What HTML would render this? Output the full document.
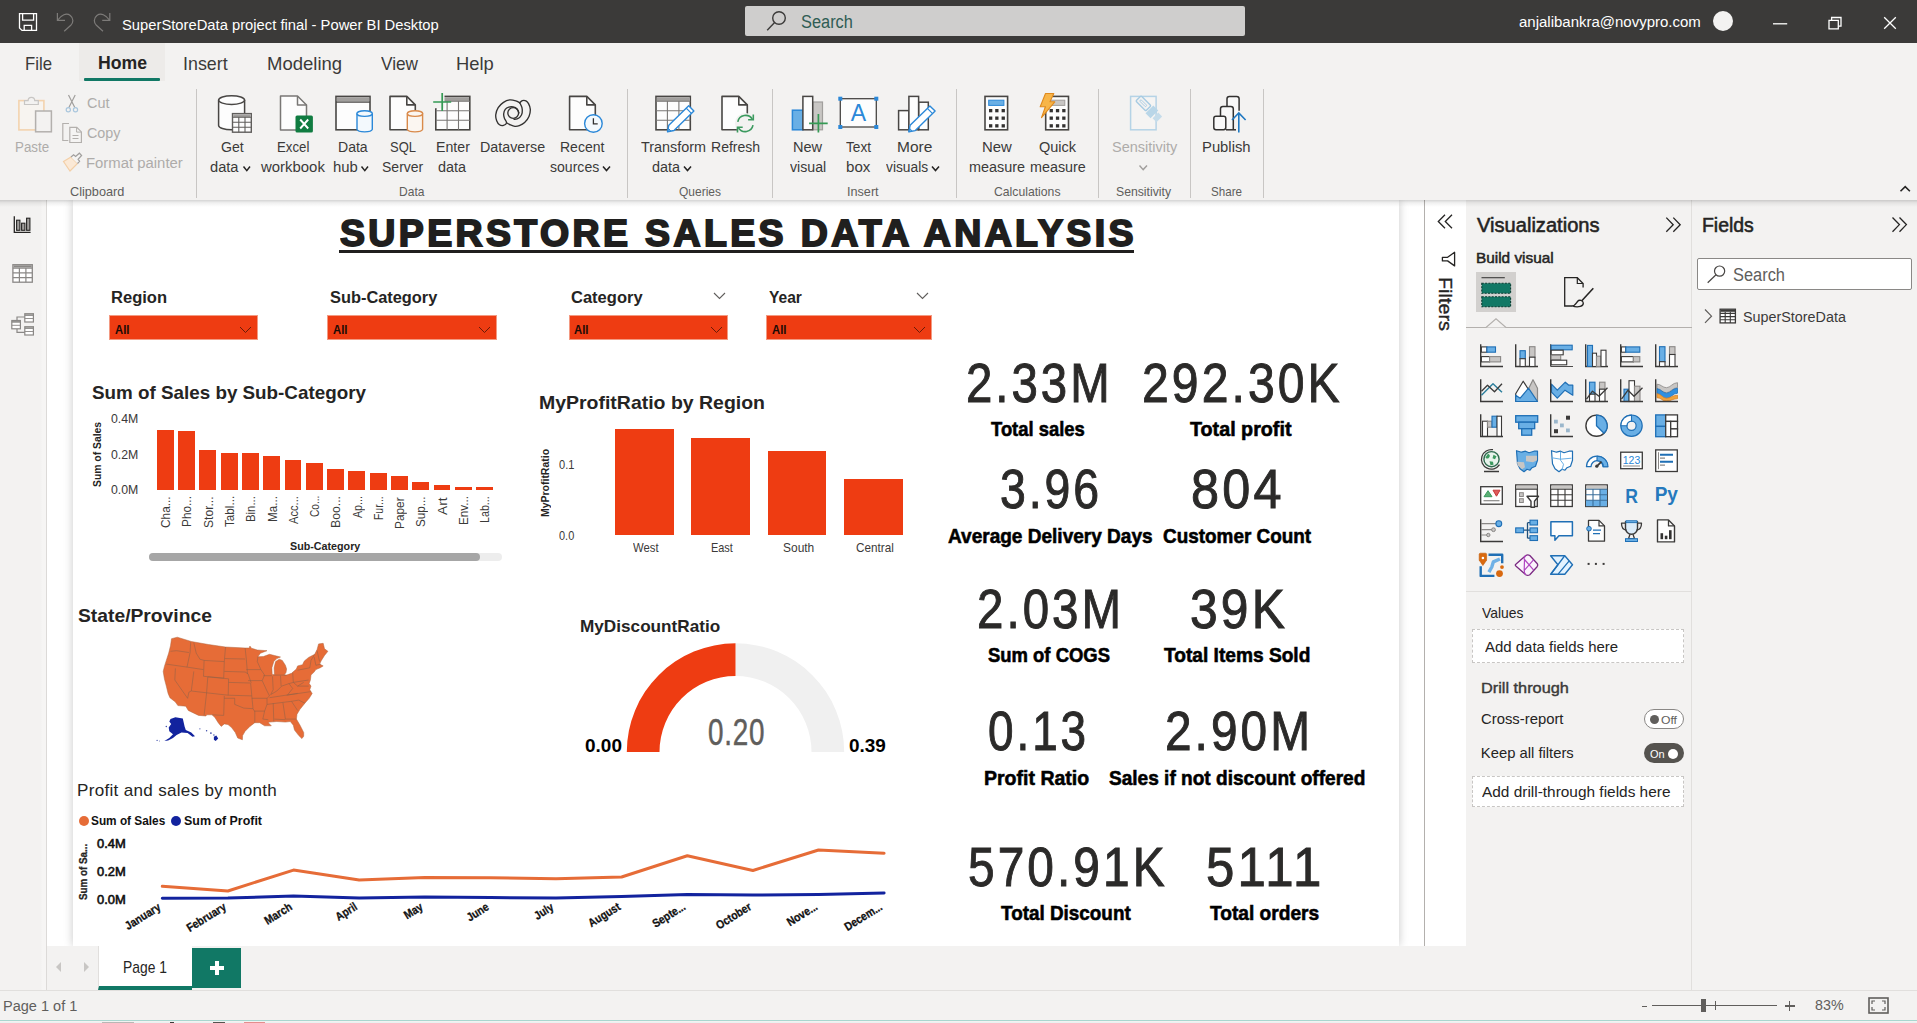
<!DOCTYPE html>
<html lang="en"><head><meta charset="utf-8"><title>SuperStoreData project final - Power BI Desktop</title>
<style>
html,body{margin:0;padding:0;overflow:hidden}
body{width:1917px;height:1023px;overflow:hidden;background:#fff;font-family:"Liberation Sans",sans-serif;color:#252423;position:relative}
.b{position:absolute;box-sizing:border-box}
.t{position:absolute;white-space:nowrap;line-height:1;transform-origin:0 0}
.rot{transform-origin:0 0;width:0;height:0}
svg{overflow:visible}
</style></head>
<body>
<header class="b" style="left:0;top:0;width:1917px;height:43px;background:#3b3a39">
<span class="t" style="left:122.34px;top:17px;font-size:15.50px;color:#fff;transform:scaleX(0.9525);">SuperStoreData project final - Power BI Desktop</span>
<div class="b" style="left:745.00px;top:6.00px;width:500.00px;height:29.70px;background:#cfcecd;border-radius:2px"></div>
<span class="t" style="left:800.76px;top:13px;font-size:18.00px;color:#2f5d54;transform:scaleX(0.9096);">Search</span>
<span class="t" style="left:1519.40px;top:14px;font-size:15.30px;color:#fff;transform:scaleX(0.9796);">anjalibankra@novypro.com</span>
<div class="b" style="left:1712.90px;top:10.70px;width:20.40px;height:20.40px;background:#f3f2f1;border-radius:50%"></div>
<svg class="b" style="left:0px;top:0px" width="1917" height="43" viewBox="0 0 1917 43"><g fill="none" stroke="#fff" stroke-width="1.3"><path d="M19.5 13.6h17v16.8h-14.5l-2.500 -2.500z"/><path d="M22.6 13.6v6.5h11v-6.500"/><path d="M24.2 30.4v-5h7.4v5"/></g><g fill="none" stroke="#7d7b79" stroke-width="1.2"><path d="M57.4 13v7.4h7.600"/><path d="M57.8 20c3.500 -5 8.500 -7.500 12.500 -4.500c3.500 2.800 3.200 7 0.500 9.800l-6.600 6"/><path d="M109.800 13v7.400h-7.600"/><path d="M109.400 20c-3.500 -5 -8.500 -7.500 -12.500 -4.500c-3.500 2.800 -3.200 7 -0.500 9.800l6.600 6"/></g><g fill="none" stroke="#3b3a39" stroke-width="1.4"><circle cx="779" cy="18" r="6.300"/><path d="M774.600 22.600l-7.400 7.600"/></g><g fill="none" stroke="#fff" stroke-width="1.3"><path d="M1773 23.800h14.200"/><path d="M1829 20.300h9.300v8.600h-9.300z"/><path d="M1831.600 20v-2.500h9.400v8.700h-2.500"/><path d="M1884.200 17.200l11.600 11.600M1895.800 17.200l-11.600 11.600"/></g></svg>
</header>
<nav class="b" style="left:0;top:43px;width:1917px;height:42px;background:#f3f2f1">
<div class="b" style="left:79.00px;top:0.00px;width:86.00px;height:38.00px;background:#edebe9;"></div>
<div class="b" style="left:84.00px;top:35.00px;width:76.00px;height:3.00px;background:#117865;border-radius:1px"></div>
<span class="t" style="left:24.86px;top:11px;font-size:19.00px;color:#3b3a39;transform:scaleX(0.8831);">File</span>
<span class="t" style="left:97.55px;top:11px;font-size:18.50px;font-weight:700;color:#252423;transform:scaleX(0.9540);">Home</span>
<span class="t" style="left:183.39px;top:11px;font-size:19.00px;color:#3b3a39;transform:scaleX(0.9391);">Insert</span>
<span class="t" style="left:267.02px;top:11px;font-size:19.00px;color:#3b3a39;transform:scaleX(0.9747);">Modeling</span>
<span class="t" style="left:381.00px;top:11px;font-size:19.00px;color:#3b3a39;transform:scaleX(0.9058);">View</span>
<span class="t" style="left:456.03px;top:11px;font-size:19.00px;color:#3b3a39;transform:scaleX(0.9656);">Help</span>
</nav>
<div class="b" style="left:0;top:200px;width:1917px;height:7px;background:linear-gradient(rgba(0,0,0,.17),rgba(0,0,0,.06) 40%,rgba(0,0,0,0));z-index:6"></div>
<section class="b" style="left:0;top:85px;width:1917px;height:115px;background:#f3f2f1;z-index:5">
<span class="t" style="left:15.03px;top:54px;font-size:15.30px;color:#aeacaa;transform:scaleX(0.8724);">Paste</span>
<span class="t" style="left:86.88px;top:10px;font-size:15.30px;color:#aeacaa;transform:scaleX(0.9424);">Cut</span>
<span class="t" style="left:86.88px;top:40px;font-size:15.30px;color:#aeacaa;transform:scaleX(0.9382);">Copy</span>
<span class="t" style="left:86.41px;top:70px;font-size:15.30px;color:#aeacaa;transform:scaleX(0.9727);">Format painter</span>
<span class="t" style="left:220.89px;top:54px;font-size:15.30px;color:#3b3a39;transform:scaleX(0.9217);">Get</span>
<span class="t" style="left:210.31px;top:74px;font-size:15.30px;color:#3b3a39;transform:scaleX(0.9581);">data</span>
<span class="t" style="left:276.74px;top:54px;font-size:15.30px;color:#3b3a39;transform:scaleX(0.8648);">Excel</span>
<span class="t" style="left:261.07px;top:74px;font-size:15.30px;color:#3b3a39;transform:scaleX(0.9751);">workbook</span>
<span class="t" style="left:337.78px;top:54px;font-size:15.30px;color:#3b3a39;transform:scaleX(0.9186);">Data</span>
<span class="t" style="left:333.13px;top:74px;font-size:15.30px;color:#3b3a39;transform:scaleX(0.9720);">hub</span>
<span class="t" style="left:390.22px;top:54px;font-size:15.30px;color:#3b3a39;transform:scaleX(0.8488);">SQL</span>
<span class="t" style="left:382.37px;top:74px;font-size:15.30px;color:#3b3a39;transform:scaleX(0.9153);">Server</span>
<span class="t" style="left:436.07px;top:54px;font-size:15.30px;color:#3b3a39;transform:scaleX(0.9256);">Enter</span>
<span class="t" style="left:438.42px;top:74px;font-size:15.30px;color:#3b3a39;transform:scaleX(0.9410);">data</span>
<span class="t" style="left:480.46px;top:54px;font-size:15.30px;color:#3b3a39;transform:scaleX(0.9343);">Dataverse</span>
<span class="t" style="left:560.18px;top:54px;font-size:15.30px;color:#3b3a39;transform:scaleX(0.9152);">Recent</span>
<span class="t" style="left:550.35px;top:74px;font-size:15.30px;color:#3b3a39;transform:scaleX(0.9196);">sources</span>
<span class="t" style="left:641.41px;top:54px;font-size:15.30px;color:#3b3a39;transform:scaleX(0.9402);">Transform</span>
<span class="t" style="left:651.52px;top:74px;font-size:15.30px;color:#3b3a39;transform:scaleX(0.9410);">data</span>
<span class="t" style="left:710.68px;top:54px;font-size:15.30px;color:#3b3a39;transform:scaleX(0.9181);">Refresh</span>
<span class="t" style="left:792.74px;top:54px;font-size:15.30px;color:#3b3a39;transform:scaleX(0.9507);">New</span>
<span class="t" style="left:790.40px;top:74px;font-size:15.30px;color:#3b3a39;transform:scaleX(0.9247);">visual</span>
<span class="t" style="left:845.53px;top:54px;font-size:15.30px;color:#3b3a39;transform:scaleX(0.8919);">Text</span>
<span class="t" style="left:845.59px;top:74px;font-size:15.30px;color:#3b3a39;transform:scaleX(0.9889);">box</span>
<span class="t" style="left:896.56px;top:54px;font-size:15.30px;color:#3b3a39;transform:scaleX(1.0130);">More</span>
<span class="t" style="left:886.20px;top:74px;font-size:15.30px;color:#3b3a39;transform:scaleX(0.9003);">visuals</span>
<span class="t" style="left:981.71px;top:54px;font-size:15.30px;color:#3b3a39;transform:scaleX(0.9745);">New</span>
<span class="t" style="left:968.86px;top:74px;font-size:15.30px;color:#3b3a39;transform:scaleX(0.9428);">measure</span>
<span class="t" style="left:1038.95px;top:54px;font-size:15.30px;color:#3b3a39;transform:scaleX(0.9486);">Quick</span>
<span class="t" style="left:1029.57px;top:74px;font-size:15.30px;color:#3b3a39;transform:scaleX(0.9377);">measure</span>
<span class="t" style="left:1111.55px;top:54px;font-size:15.30px;color:#aeacaa;transform:scaleX(0.9477);">Sensitivity</span>
<span class="t" style="left:1202.42px;top:54px;font-size:15.30px;color:#3b3a39;transform:scaleX(0.9679);">Publish</span>
<span class="t" style="left:69.86px;top:100px;font-size:13.20px;color:#605e5c;transform:scaleX(0.9629);">Clipboard</span>
<span class="t" style="left:398.54px;top:100px;font-size:13.20px;color:#605e5c;transform:scaleX(0.9121);">Data</span>
<span class="t" style="left:678.96px;top:100px;font-size:13.20px;color:#605e5c;transform:scaleX(0.9082);">Queries</span>
<span class="t" style="left:847.36px;top:100px;font-size:13.20px;color:#605e5c;transform:scaleX(0.9588);">Insert</span>
<span class="t" style="left:993.89px;top:100px;font-size:13.20px;color:#605e5c;transform:scaleX(0.9258);">Calculations</span>
<span class="t" style="left:1116.45px;top:100px;font-size:13.20px;color:#605e5c;transform:scaleX(0.9268);">Sensitivity</span>
<span class="t" style="left:1210.98px;top:100px;font-size:13.20px;color:#605e5c;transform:scaleX(0.8809);">Share</span>
<div class="b" style="left:196.00px;top:4.00px;width:1.00px;height:109.00px;background:#c8c6c4;"></div>
<div class="b" style="left:627.00px;top:4.00px;width:1.00px;height:109.00px;background:#c8c6c4;"></div>
<div class="b" style="left:772.00px;top:4.00px;width:1.00px;height:109.00px;background:#c8c6c4;"></div>
<div class="b" style="left:956.00px;top:4.00px;width:1.00px;height:109.00px;background:#c8c6c4;"></div>
<div class="b" style="left:1098.00px;top:4.00px;width:1.00px;height:109.00px;background:#c8c6c4;"></div>
<div class="b" style="left:1190.00px;top:4.00px;width:1.00px;height:109.00px;background:#c8c6c4;"></div>
<div class="b" style="left:1263.00px;top:4.00px;width:1.00px;height:109.00px;background:#c8c6c4;"></div>
<svg class="b" style="left:0;top:0" width="1917" height="115" viewBox="0 0 1917 115"><g transform="translate(0,-85)"><rect x="18.9" y="100.6" width="25" height="29.3" fill="#f7f4f0" stroke="#f3d3ae" stroke-width="1.6"/><path d="M24.500 104.500v-3.800h3.600a3.300 3.300 0 0 1 6.600 0h3.600v3.800z" fill="#f3f2f1" stroke="#c8c6c4" stroke-width="1.2"/><rect x="35.600" y="111" width="15.800" height="20.800" fill="#f3f2f1" stroke="#b3b0ad" stroke-width="1.5"/><path d="M68.500 95l6.300 12.500M75.200 95l-6.300 12.500" stroke="#a19f9d" stroke-width="1.2" fill="none"/><circle cx="68.300" cy="109.800" r="2.100" fill="none" stroke="#a9c6dd" stroke-width="1.2"/><circle cx="75.500" cy="109.800" r="2.100" fill="none" stroke="#a9c6dd" stroke-width="1.2"/><path d="M69 123.500h-6.200v17h5.500" fill="none" stroke="#b3b0ad" stroke-width="1.2"/><path d="M69.800 127.300h7l4.600 4.600v10.600h-11.600z" fill="#f5f4f3" stroke="#b3b0ad" stroke-width="1.200"/><path d="M76.600 127.500v4.600h4.600M72.500 135.500h6M72.500 138.500h6" fill="none" stroke="#b3b0ad" stroke-width="1"/><path d="M63.500 161.500l7.500-4.500 6.500 6.500-7.500 7.500z" fill="#fbe9d6" stroke="#f3cfa7" stroke-width="1.2"/><path d="M71 157l2.600-2.200 2 1.700 3.800-3.300 2.200 2.300-3.500 3.800 1.500 2-2.100 2.200" fill="#f5f4f3" stroke="#a19f9d" stroke-width="1.200"/><path d="M218.6 100.1V125.5A13.0 4.3 0 0 0 244.6 125.5V100.1" fill="#fdfdfd" stroke="#484644" stroke-width="1.5"/><ellipse cx="231.6" cy="100.1" rx="13.0" ry="4.3" fill="#fdfdfd" stroke="#484644" stroke-width="1.5"/><rect x="232.5" y="113.6" width="18.8" height="18.6" fill="#fdfdfd" stroke="#605e5c" stroke-width="1.4"/><rect x="233.2" y="114.3" width="17.4" height="3.0" fill="#a19f9d"/><path d="M232.5 117.3H251.3M232.5 122.3H251.3M232.5 127.2H251.3M238.8 117.3V132.2M245.0 117.3V132.2" fill="none" stroke="#605e5c" stroke-width="1.1"/><path d="M243.5 166.5L246.8 170.6L250.0 166.5" fill="none" stroke="#252423" stroke-width="1.5"/><path d="M280.5 96.0H297.5L306.5 105.0V130.0H280.5Z" fill="#fdfdfd" stroke="#797775" stroke-width="1.5" stroke-linejoin="round"/><path d="M297.5 96.0V105.0H306.5" fill="none" stroke="#797775" stroke-width="1.5" stroke-linejoin="round"/><rect x="295.5" y="115.400" width="17.400" height="17" rx="1.5" fill="#107c41"/><path d="M300.200 119.500l8 9M308.200 119.500l-8 9" stroke="#fff" stroke-width="1.900" fill="none"/><rect x="336" y="96.400" width="34" height="33.400" fill="#fdfdfd" stroke="#484644" stroke-width="1.6"/><rect x="336.800" y="97.200" width="32.400" height="4.300" fill="#a19f9d"/><path d="M336 102.200h34" stroke="#484644" stroke-width="1.2"/><path d="M357.0 113.6V129.4A7.7 2.8 0 0 0 372.3 129.4V113.6" fill="#f3f9fd" stroke="#2b88d8" stroke-width="1.4"/><ellipse cx="364.6" cy="113.6" rx="7.7" ry="2.8" fill="#f3f9fd" stroke="#2b88d8" stroke-width="1.4"/><path d="M361.5 166.5L364.8 170.6L368.0 166.5" fill="none" stroke="#252423" stroke-width="1.5"/><path d="M390.0 96.4H406.8L415.3 104.9V129.8H390.0Z" fill="#fdfdfd" stroke="#484644" stroke-width="1.6" stroke-linejoin="round"/><path d="M406.8 96.4V104.9H415.3" fill="none" stroke="#484644" stroke-width="1.6" stroke-linejoin="round"/><path d="M407.3 113.6V129.4A7.7 2.8 0 0 0 422.6 129.4V113.6" fill="#fbf6f1" stroke="#d98a4b" stroke-width="1.4"/><ellipse cx="415.0" cy="113.6" rx="7.7" ry="2.8" fill="#fbf6f1" stroke="#d98a4b" stroke-width="1.4"/><rect x="435.8" y="96.4" width="34.0" height="33.4" fill="#fdfdfd" stroke="#484644" stroke-width="1.6"/><rect x="436.6" y="97.2" width="32.4" height="4.0" fill="#a19f9d"/><path d="M435.8 101.2H469.8M435.8 110.7H469.8M435.8 120.3H469.8M447.1 101.2V129.8M458.5 101.2V129.8" fill="none" stroke="#797775" stroke-width="1.1"/><rect x="432" y="92.500" width="12.500" height="16" fill="#f3f2f1"/><path d="M435.800 108.500v-0.500" stroke="#484644" stroke-width="1.600"/><path d="M433.2 102.0H451.2M442.2 93.0V111.0" stroke="#359a55" stroke-width="1.7" fill="none"/><g fill="none" stroke="#323130" stroke-width="1.350" stroke-linecap="round"><path d="M519.76 102.76C519.10 102.43 517.48 101.26 515.80 100.78C514.11 100.30 511.69 99.64 509.64 99.90C507.58 100.16 505.38 101.04 503.48 102.32C501.57 103.60 499.48 105.54 498.20 107.60C496.92 109.65 496.04 112.44 495.78 114.64C495.52 116.84 496.04 119.11 496.66 120.80C497.28 122.48 498.38 123.99 499.52 124.76C500.65 125.53 502.30 125.75 503.48 125.42C504.65 125.09 506.41 123.99 506.56 122.78C506.70 121.57 504.83 119.66 504.36 118.16C503.88 116.65 503.55 115.22 503.70 113.76C503.84 112.29 504.39 110.46 505.24 109.36C506.08 108.26 507.44 107.56 508.76 107.16C510.08 106.75 511.76 106.64 513.16 106.94C514.55 107.23 516.16 107.93 517.12 108.92C518.07 109.91 518.58 112.22 518.88 112.88"/><path d="M519.76 102.76C520.20 102.39 521.37 100.89 522.40 100.56C523.42 100.23 524.89 100.27 525.92 100.78C526.94 101.29 527.82 102.21 528.55 103.64C529.29 105.07 530.24 107.23 530.31 109.36C530.39 111.48 529.95 114.20 528.99 116.40C528.04 118.60 526.21 121.02 524.60 122.56C522.98 124.10 520.93 125.01 519.32 125.64C517.70 126.26 516.38 126.41 514.92 126.30C513.45 126.19 511.91 125.56 510.52 124.98C509.12 124.39 507.22 123.14 506.56 122.78"/><path d="M519.76 102.76C520.12 103.57 521.55 105.91 521.96 107.60C522.36 109.28 522.47 111.34 522.18 112.88C521.88 114.42 521.04 115.85 520.20 116.84C519.35 117.83 518.14 118.41 517.12 118.82C516.09 119.22 514.55 119.18 514.04 119.26"/><circle cx="513.200" cy="113" r="5.400"/></g><path d="M569.6 96.4H586.8L595.3 104.9V129.8H569.6Z" fill="#fdfdfd" stroke="#484644" stroke-width="1.6" stroke-linejoin="round"/><path d="M586.8 96.4V104.9H595.3" fill="none" stroke="#484644" stroke-width="1.6" stroke-linejoin="round"/><circle cx="593.400" cy="123.500" r="8.800" fill="#f3f9fd" stroke="#2b88d8" stroke-width="1.400"/><path d="M593.400 118.300v5.600h4.300" fill="none" stroke="#323130" stroke-width="1.300"/><path d="M603.0 166.5L606.5 170.6L610.0 166.5" fill="none" stroke="#252423" stroke-width="1.5"/><rect x="656.0" y="96.4" width="34.3" height="33.4" fill="#fdfdfd" stroke="#484644" stroke-width="1.6"/><rect x="656.8" y="97.2" width="32.7" height="4.0" fill="#a19f9d"/><path d="M656.0 101.2H690.3M656.0 110.7H690.3M656.0 120.3H690.3M667.4 101.2V129.8M678.9 101.2V129.8" fill="none" stroke="#797775" stroke-width="1.1"/><path d="M667.5 131.7L674.0 130.5L693.9 110.9L688.7 105.7L668.8 125.2Z" fill="#fff" stroke="#2b88d8" stroke-width="1.4" stroke-linejoin="round"/><path d="M667.5 131.7L670.8 130.8L668.4 128.4Z" fill="#69afe5" stroke="#2b88d8" stroke-width="1"/><path d="M691.4 113.4L686.2 108.1" stroke="#2b88d8" stroke-width="1.2" fill="none"/><path d="M684.0 166.5L687.5 170.6L691.0 166.5" fill="none" stroke="#252423" stroke-width="1.5"/><path d="M722.0 96.4H738.8L747.3 104.9V129.8H722.0Z" fill="#fdfdfd" stroke="#484644" stroke-width="1.6" stroke-linejoin="round"/><path d="M738.8 96.4V104.9H747.3" fill="none" stroke="#484644" stroke-width="1.6" stroke-linejoin="round"/><circle cx="745.400" cy="123.500" r="10.500" fill="#f3f2f1"/><g fill="none" stroke="#3c9a5f" stroke-width="1.600"><path d="M737.800 121.800a7.900 7.900 0 0 1 14.500-2.600"/><path d="M753 125.200a7.900 7.900 0 0 1-14.500 2.600"/><path d="M753.300 114.500v5.200h-5.200"/><path d="M737.500 132.500v-5.200h5.200"/></g><rect x="812.700" y="102" width="9.800" height="27.800" fill="#c8c6c4" stroke="#a19f9d" stroke-width="1.200"/><rect x="792.400" y="110.200" width="10.500" height="19.600" fill="#69afe5" stroke="#2b88d8" stroke-width="1.500"/><rect x="802.900" y="96.400" width="9.800" height="33.400" fill="#fdfdfd" stroke="#484644" stroke-width="1.500"/><path d="M809.1 123.3H827.7M818.4 114.0V132.6" stroke="#359a55" stroke-width="1.7" fill="none"/><rect x="840.300" y="98.700" width="36" height="28.300" fill="#fdfdfd" stroke="#484644" stroke-width="1.300"/><rect x="838.3" y="96.7" width="4" height="4" fill="#2b88d8"/><rect x="874.3" y="96.7" width="4" height="4" fill="#2b88d8"/><rect x="838.3" y="125.0" width="4" height="4" fill="#2b88d8"/><rect x="874.3" y="125.0" width="4" height="4" fill="#2b88d8"/><text x="858.300" y="120.800" text-anchor="middle" font-family="Liberation Sans, sans-serif" font-size="23" fill="#2b88d8">A</text><rect x="918.600" y="102.200" width="9.700" height="27.600" fill="#fdfdfd" stroke="#484644" stroke-width="1.500"/><rect x="898.600" y="110.600" width="10.300" height="19.200" fill="#fdfdfd" stroke="#484644" stroke-width="1.500"/><rect x="908.900" y="96.400" width="9.700" height="33.400" fill="#fdfdfd" stroke="#484644" stroke-width="1.500"/><path d="M908.8 131.8L915.3 130.6L935.1 111.1L929.9 105.9L910.1 125.3Z" fill="#fff" stroke="#2b88d8" stroke-width="1.4" stroke-linejoin="round"/><path d="M908.8 131.8L912.1 130.9L909.7 128.5Z" fill="#69afe5" stroke="#2b88d8" stroke-width="1"/><path d="M932.6 113.6L927.4 108.3" stroke="#2b88d8" stroke-width="1.2" fill="none"/><path d="M932.0 166.5L935.5 170.6L939.0 166.5" fill="none" stroke="#252423" stroke-width="1.5"/><rect x="985.0" y="96.4" width="22.6" height="33.4" fill="#fdfdfd" stroke="#484644" stroke-width="1.6"/><rect x="988.7" y="100.2" width="15.2" height="5.2" fill="#69afe5" stroke="#2b88d8" stroke-width="1"/><rect x="989.0" y="109.0" width="3.3" height="3.3" fill="#323130"/><rect x="995.2" y="109.0" width="3.3" height="3.3" fill="#323130"/><rect x="1001.6" y="109.0" width="3.3" height="3.3" fill="#323130"/><rect x="989.0" y="116.5" width="3.3" height="3.3" fill="#323130"/><rect x="995.2" y="116.5" width="3.3" height="3.3" fill="#323130"/><rect x="1001.6" y="116.5" width="3.3" height="3.3" fill="#323130"/><rect x="989.0" y="124.2" width="3.3" height="3.3" fill="#323130"/><rect x="995.2" y="124.2" width="3.3" height="3.3" fill="#323130"/><rect x="1001.6" y="124.2" width="3.3" height="3.3" fill="#323130"/><rect x="1045.7" y="96.4" width="22.8" height="33.4" fill="#fdfdfd" stroke="#484644" stroke-width="1.6"/><rect x="1049.4" y="100.2" width="15.4" height="5.2" fill="#c8c6c4" stroke="#a19f9d" stroke-width="1"/><rect x="1049.6" y="109.0" width="3.3" height="3.3" fill="#323130"/><rect x="1055.9" y="109.0" width="3.3" height="3.3" fill="#323130"/><rect x="1062.2" y="109.0" width="3.3" height="3.3" fill="#323130"/><rect x="1049.6" y="116.5" width="3.3" height="3.3" fill="#323130"/><rect x="1055.9" y="116.5" width="3.3" height="3.3" fill="#323130"/><rect x="1062.2" y="116.5" width="3.3" height="3.3" fill="#323130"/><rect x="1049.6" y="124.2" width="3.3" height="3.3" fill="#323130"/><rect x="1055.9" y="124.2" width="3.3" height="3.3" fill="#323130"/><rect x="1062.2" y="124.2" width="3.3" height="3.3" fill="#323130"/><path d="M1045.500 93.500h8.300l-3.800 8.300h4.800l-13.300 15.800 3.900-10.800h-5.200z" fill="#f7b548" stroke="#e08a1e" stroke-width="1.100" stroke-linejoin="round"/><rect x="1130.600" y="96.400" width="25.500" height="33.400" fill="#f5f4f3" stroke="#b5d3e6" stroke-width="1.500"/><g transform="rotate(45 1148 108)"><rect x="1134.500" y="104.300" width="14" height="7.400" rx="1" fill="#f3f2f1" stroke="#a6cbe3" stroke-width="1.400"/><rect x="1137" y="107" width="8.500" height="2" rx="1" fill="none" stroke="#a6cbe3" stroke-width="0.900"/><rect x="1150" y="102.500" width="7" height="11" fill="#b9d6e8"/><rect x="1158.500" y="104" width="5.500" height="8" fill="#c5dcea"/></g><path d="M1139.5 165.5L1143.2 169.6L1147.0 165.5" fill="none" stroke="#a19f9d" stroke-width="1.4"/><g fill="#f8f8f8" stroke="#323130" stroke-width="1.500"><path d="M1227 129.800v-31a2.400 2.400 0 0 1 2.400-2.400h7.300a2.400 2.400 0 0 1 2.400 2.400v12"/><path d="M1220.500 129.800v-21a2.400 2.400 0 0 1 2.400-2.400h8a2.400 2.400 0 0 1 2.400 2.400v21"/><rect x="1213.800" y="116.300" width="12" height="13.500" rx="2.200"/><path d="M1226 129.800h10" fill="none"/></g><path d="M1238.800 132.500v-19M1232 120l6.800-7 6.800 7" fill="none" stroke="#1f78c1" stroke-width="1.600"/><path d="M1900.500 191.300l4.700-4.700 4.700 4.700" fill="none" stroke="#252423" stroke-width="1.600"/></g></svg>
</section>
<aside class="b" style="left:0;top:200px;width:47px;height:790px;background:linear-gradient(90deg,#f3f2f1 0,#f3f2f1 41px,#f6f5f4 42px,#f6f5f4 46px,#dcdad8 46px)">
<svg class="b" style="left:0;top:0" width="47" height="200" viewBox="0 200 47 200"><path d="M14.300 216.300v16h16.300" fill="none" stroke="#252423" stroke-width="1.300"/><rect x="16.6" y="220.2" width="3.300" height="10.1" fill="#a19f9d" stroke="#252423" stroke-width="1.100"/><rect x="21.6" y="223.2" width="3.300" height="7.1" fill="#a19f9d" stroke="#252423" stroke-width="1.100"/><rect x="26.6" y="218.2" width="3.300" height="12.1" fill="#a19f9d" stroke="#252423" stroke-width="1.100"/><rect x="12.900" y="264.700" width="19.400" height="17.500" fill="#fff" stroke="#8a8886" stroke-width="1.300"/><path d="M12.900 268.200h19.400M12.900 272.900h19.400M12.900 277.600h19.400M19.400 268.200v14M25.900 268.200v14" fill="none" stroke="#8a8886" stroke-width="1.200"/><path d="M13.500 266.400h18.200" stroke="#8a8886" stroke-width="2.200"/><path d="M17 320.500v-3.500h8M17 329v3.300h8" fill="none" stroke="#8a8886" stroke-width="1.200"/><rect x="11.8" y="320.5" width="8.6" height="8.3" fill="#fff" stroke="#8a8886" stroke-width="1.200"/><path d="M11.8 321.9h8.6" stroke="#8a8886" stroke-width="1.600"/><path d="M11.8 325.3h8.6" stroke="#8a8886" stroke-width="0.900"/><rect x="24.8" y="313.7" width="8.6" height="8.3" fill="#fff" stroke="#8a8886" stroke-width="1.200"/><path d="M24.8 315.1h8.6" stroke="#8a8886" stroke-width="1.600"/><path d="M24.8 318.5h8.6" stroke="#8a8886" stroke-width="0.900"/><rect x="24.8" y="326.7" width="8.6" height="8.3" fill="#fff" stroke="#8a8886" stroke-width="1.200"/><path d="M24.8 328.1h8.6" stroke="#8a8886" stroke-width="1.600"/><path d="M24.8 331.5h8.6" stroke="#8a8886" stroke-width="0.900"/></svg>
</aside>
<main class="b" style="left:73px;top:200px;width:1326px;height:746px;background:#fff;box-shadow:0 0 9px rgba(0,0,0,.22)">
<span class="t" style="left:267.01px;top:15px;font-size:37.60px;font-weight:700;color:#201f1e;letter-spacing:3.40px;-webkit-text-stroke:1.90px #201f1e;transform:scaleX(0.9968);">SUPERSTORE SALES DATA ANALYSIS</span>
<div class="b" style="left:266.30px;top:50.00px;width:794.70px;height:3.00px;background:#201f1e;"></div>
<span class="t" style="left:37.92px;top:89px;font-size:17.20px;font-weight:700;color:#252423;transform:scaleX(0.9616);">Region</span>
<div class="b" style="left:36.30px;top:115.20px;width:148.40px;height:24.60px;background:#ee3c12;border:0.7px solid #f39a82;"></div>
<span class="t" style="left:41.92px;top:124px;font-size:12.00px;font-weight:700;color:#1a0a05;transform:scaleX(0.9423);">All</span>
<svg class="b" style="left:166.00px;top:125.80px;" width="13" height="8" viewBox="0 0 13 8"><path d="M1 1l5.5 5.5L12 1" fill="none" stroke="#6b1a08" stroke-width="1"/></svg>
<span class="t" style="left:257.09px;top:89px;font-size:17.20px;font-weight:700;color:#252423;transform:scaleX(0.9527);">Sub-Category</span>
<div class="b" style="left:254.30px;top:115.20px;width:169.40px;height:24.60px;background:#ee3c12;border:0.7px solid #f39a82;"></div>
<span class="t" style="left:259.92px;top:124px;font-size:12.00px;font-weight:700;color:#1a0a05;transform:scaleX(0.9423);">All</span>
<svg class="b" style="left:405.00px;top:125.80px;" width="13" height="8" viewBox="0 0 13 8"><path d="M1 1l5.5 5.5L12 1" fill="none" stroke="#6b1a08" stroke-width="1"/></svg>
<span class="t" style="left:498.34px;top:89px;font-size:17.20px;font-weight:700;color:#252423;transform:scaleX(0.9611);">Category</span>
<div class="b" style="left:495.80px;top:115.20px;width:159.40px;height:24.60px;background:#ee3c12;border:0.7px solid #f39a82;"></div>
<span class="t" style="left:501.42px;top:124px;font-size:12.00px;font-weight:700;color:#1a0a05;transform:scaleX(0.9423);">All</span>
<svg class="b" style="left:636.50px;top:125.80px;" width="13" height="8" viewBox="0 0 13 8"><path d="M1 1l5.5 5.5L12 1" fill="none" stroke="#6b1a08" stroke-width="1"/></svg>
<svg class="b" style="left:639.50px;top:92.00px;" width="13" height="8" viewBox="0 0 13 8"><path d="M1 1l5.5 5.5L12 1" fill="none" stroke="#605e5c" stroke-width="1.1"/></svg>
<span class="t" style="left:696.27px;top:89px;font-size:17.20px;font-weight:700;color:#252423;transform:scaleX(0.9063);">Year</span>
<div class="b" style="left:693.30px;top:115.20px;width:165.40px;height:24.60px;background:#ee3c12;border:0.7px solid #f39a82;"></div>
<span class="t" style="left:698.92px;top:124px;font-size:12.00px;font-weight:700;color:#1a0a05;transform:scaleX(0.9423);">All</span>
<svg class="b" style="left:840.00px;top:125.80px;" width="13" height="8" viewBox="0 0 13 8"><path d="M1 1l5.5 5.5L12 1" fill="none" stroke="#6b1a08" stroke-width="1"/></svg>
<svg class="b" style="left:842.50px;top:92.00px;" width="13" height="8" viewBox="0 0 13 8"><path d="M1 1l5.5 5.5L12 1" fill="none" stroke="#605e5c" stroke-width="1.1"/></svg>
<span class="t" style="left:19.03px;top:183px;font-size:19.00px;font-weight:700;color:#252423;transform:scaleX(0.9903);">Sum of Sales by Sub-Category</span>
<span class="t" style="left:38.07px;top:213px;font-size:12.20px;color:#3b3a39;transform:scaleX(1.0100);">0.4M</span>
<span class="t" style="left:38.07px;top:249px;font-size:12.20px;color:#3b3a39;transform:scaleX(1.0100);">0.2M</span>
<span class="t" style="left:38.07px;top:284px;font-size:12.20px;color:#3b3a39;transform:scaleX(1.0100);">0.0M</span>
<div class="b" style="left:83.90px;top:230.10px;width:16.90px;height:59.60px;background:#ee3c12;"></div>
<div class="b rot" style="left:97.10px;top:327.00px;transform:rotate(-90deg)"><span class="t" style="left:-0.59px;top:-10px;font-size:12.20px;color:#3b3a39;transform:scaleX(0.9719);">Cha...</span></div>
<div class="b" style="left:105.18px;top:231.00px;width:16.90px;height:58.70px;background:#ee3c12;"></div>
<div class="b rot" style="left:118.38px;top:326.00px;transform:rotate(-90deg)"><span class="t" style="left:-0.95px;top:-10px;font-size:12.20px;color:#3b3a39;transform:scaleX(0.9722);">Pho...</span></div>
<div class="b" style="left:126.46px;top:250.00px;width:16.90px;height:39.70px;background:#ee3c12;"></div>
<div class="b rot" style="left:139.66px;top:327.00px;transform:rotate(-90deg)"><span class="t" style="left:-0.54px;top:-10px;font-size:12.20px;color:#3b3a39;transform:scaleX(0.9915);">Stor...</span></div>
<div class="b" style="left:147.74px;top:252.80px;width:16.90px;height:36.90px;background:#ee3c12;"></div>
<div class="b rot" style="left:160.94px;top:327.00px;transform:rotate(-90deg)"><span class="t" style="left:-0.23px;top:-10px;font-size:12.20px;color:#3b3a39;transform:scaleX(0.9606);">Tabl...</span></div>
<div class="b" style="left:169.02px;top:252.80px;width:16.90px;height:36.90px;background:#ee3c12;"></div>
<div class="b rot" style="left:182.22px;top:321.00px;transform:rotate(-90deg)"><span class="t" style="left:-0.91px;top:-10px;font-size:12.20px;color:#3b3a39;transform:scaleX(0.9323);">Bin...</span></div>
<div class="b" style="left:190.30px;top:256.10px;width:16.90px;height:33.60px;background:#ee3c12;"></div>
<div class="b rot" style="left:203.50px;top:321.00px;transform:rotate(-90deg)"><span class="t" style="left:-0.93px;top:-10px;font-size:12.20px;color:#3b3a39;transform:scaleX(0.9573);">Ma...</span></div>
<div class="b" style="left:211.58px;top:260.10px;width:16.90px;height:29.60px;background:#ee3c12;"></div>
<div class="b rot" style="left:224.78px;top:324.00px;transform:rotate(-90deg)"><span class="t" style="left:0.00px;top:-10px;font-size:12.20px;color:#3b3a39;transform:scaleX(0.9164);">Acc...</span></div>
<div class="b" style="left:232.86px;top:263.20px;width:16.90px;height:26.50px;background:#ee3c12;"></div>
<div class="b rot" style="left:246.06px;top:317.00px;transform:rotate(-90deg)"><span class="t" style="left:-0.51px;top:-10px;font-size:12.20px;color:#3b3a39;transform:scaleX(0.8300);">Co...</span></div>
<div class="b" style="left:254.14px;top:269.30px;width:16.90px;height:20.40px;background:#ee3c12;"></div>
<div class="b rot" style="left:267.34px;top:327.00px;transform:rotate(-90deg)"><span class="t" style="left:-0.98px;top:-10px;font-size:12.20px;color:#3b3a39;transform:scaleX(1.0057);">Boo...</span></div>
<div class="b" style="left:275.42px;top:270.70px;width:16.90px;height:19.00px;background:#ee3c12;"></div>
<div class="b rot" style="left:288.62px;top:318.00px;transform:rotate(-90deg)"><span class="t" style="left:0.00px;top:-10px;font-size:12.20px;color:#3b3a39;transform:scaleX(0.8738);">Ap...</span></div>
<div class="b" style="left:296.70px;top:272.80px;width:16.90px;height:16.90px;background:#ee3c12;"></div>
<div class="b rot" style="left:309.90px;top:319.00px;transform:rotate(-90deg)"><span class="t" style="left:-0.83px;top:-10px;font-size:12.20px;color:#3b3a39;transform:scaleX(0.8546);">Fur...</span></div>
<div class="b" style="left:317.98px;top:275.90px;width:16.90px;height:13.80px;background:#ee3c12;"></div>
<div class="b rot" style="left:331.18px;top:327.50px;transform:rotate(-90deg)"><span class="t" style="left:-0.95px;top:-10px;font-size:12.20px;color:#3b3a39;transform:scaleX(0.9709);">Paper</span></div>
<div class="b" style="left:339.26px;top:281.70px;width:16.90px;height:8.00px;background:#ee3c12;"></div>
<div class="b rot" style="left:352.46px;top:326.00px;transform:rotate(-90deg)"><span class="t" style="left:-0.53px;top:-10px;font-size:12.20px;color:#3b3a39;transform:scaleX(0.9585);">Sup...</span></div>
<div class="b" style="left:360.54px;top:285.00px;width:16.90px;height:4.70px;background:#ee3c12;"></div>
<div class="b rot" style="left:373.74px;top:314.50px;transform:rotate(-90deg)"><span class="t" style="left:0.00px;top:-10px;font-size:12.20px;color:#3b3a39;transform:scaleX(1.1250);">Art</span></div>
<div class="b" style="left:381.82px;top:286.90px;width:16.90px;height:2.80px;background:#ee3c12;"></div>
<div class="b rot" style="left:395.02px;top:324.00px;transform:rotate(-90deg)"><span class="t" style="left:-0.93px;top:-10px;font-size:12.20px;color:#3b3a39;transform:scaleX(0.9560);">Env...</span></div>
<div class="b" style="left:403.10px;top:287.40px;width:16.90px;height:2.30px;background:#ee3c12;"></div>
<div class="b rot" style="left:416.30px;top:322.00px;transform:rotate(-90deg)"><span class="t" style="left:-0.86px;top:-10px;font-size:12.20px;color:#3b3a39;transform:scaleX(0.8776);">Lab...</span></div>
<div class="b rot" style="left:28.30px;top:286.50px;transform:rotate(-90deg)"><span class="t" style="left:-0.26px;top:-9px;font-size:11.50px;font-weight:700;color:#252423;transform:scaleX(0.9017);">Sum of Sales</span></div>
<span class="t" style="left:216.73px;top:341px;font-size:11.50px;font-weight:700;color:#252423;transform:scaleX(0.9322);">Sub-Category</span>
<div class="b" style="left:76.00px;top:353.40px;width:352.50px;height:7.20px;background:#ededed;border-radius:4px"></div>
<div class="b" style="left:76.00px;top:353.40px;width:331.00px;height:7.20px;background:#a6a6a6;border-radius:4px"></div>
<span class="t" style="left:466.24px;top:193px;font-size:19.00px;font-weight:700;color:#252423;transform:scaleX(1.0242);">MyProfitRatio by Region</span>
<div class="b" style="left:542.00px;top:229.20px;width:58.80px;height:105.80px;background:#ee3c12;"></div>
<div class="b" style="left:618.40px;top:238.00px;width:58.60px;height:97.00px;background:#ee3c12;"></div>
<div class="b" style="left:694.70px;top:250.80px;width:58.30px;height:84.20px;background:#ee3c12;"></div>
<div class="b" style="left:771.20px;top:279.20px;width:58.40px;height:55.80px;background:#ee3c12;"></div>
<span class="t" style="left:485.61px;top:259px;font-size:12.20px;color:#3b3a39;transform:scaleX(0.9073);">0.1</span>
<span class="t" style="left:485.62px;top:330px;font-size:12.20px;color:#3b3a39;transform:scaleX(0.9004);">0.0</span>
<div class="b rot" style="left:475.70px;top:315.50px;transform:rotate(-90deg)"><span class="t" style="left:-0.68px;top:-9px;font-size:11.50px;font-weight:700;color:#252423;transform:scaleX(0.9103);">MyProfitRatio</span></div>
<span class="t" style="left:560.05px;top:342px;font-size:12.20px;color:#3b3a39;transform:scaleX(0.9269);">West</span>
<span class="t" style="left:637.62px;top:342px;font-size:12.20px;color:#3b3a39;transform:scaleX(0.8965);">East</span>
<span class="t" style="left:709.86px;top:342px;font-size:12.20px;color:#3b3a39;transform:scaleX(0.9816);">South</span>
<span class="t" style="left:782.66px;top:342px;font-size:12.20px;color:#3b3a39;transform:scaleX(0.9620);">Central</span>
<span class="t" style="left:892.61px;top:156px;font-size:55.20px;color:#2b2a29;letter-spacing:3.50px;-webkit-text-stroke:0.95px #2b2a29;transform:scaleX(0.8582);">2.33M</span>
<span class="t" style="left:1069.07px;top:156px;font-size:55.20px;color:#2b2a29;letter-spacing:3.50px;-webkit-text-stroke:0.95px #2b2a29;transform:scaleX(0.8724);">292.30K</span>
<span class="t" style="left:917.69px;top:220px;font-size:19.30px;font-weight:700;color:#000;-webkit-text-stroke:0.55px #000;transform:scaleX(0.9547);">Total sales</span>
<span class="t" style="left:1117.48px;top:220px;font-size:19.30px;font-weight:700;color:#000;-webkit-text-stroke:0.55px #000;transform:scaleX(1.0226);">Total profit</span>
<span class="t" style="left:926.85px;top:262px;font-size:55.20px;color:#2b2a29;letter-spacing:3.50px;-webkit-text-stroke:0.95px #2b2a29;transform:scaleX(0.8411);">3.96</span>
<span class="t" style="left:1118.46px;top:262px;font-size:55.20px;color:#2b2a29;letter-spacing:3.50px;-webkit-text-stroke:0.95px #2b2a29;transform:scaleX(0.9132);">804</span>
<span class="t" style="left:874.80px;top:327px;font-size:19.30px;font-weight:700;color:#000;-webkit-text-stroke:0.55px #000;transform:scaleX(0.9875);">Average Delivery Days</span>
<span class="t" style="left:1089.82px;top:327px;font-size:19.30px;font-weight:700;color:#000;-webkit-text-stroke:0.55px #000;transform:scaleX(0.9807);">Customer Count</span>
<span class="t" style="left:903.80px;top:382px;font-size:55.20px;color:#2b2a29;letter-spacing:3.50px;-webkit-text-stroke:0.95px #2b2a29;transform:scaleX(0.8607);">2.03M</span>
<span class="t" style="left:1116.93px;top:382px;font-size:55.20px;color:#2b2a29;letter-spacing:3.50px;-webkit-text-stroke:0.95px #2b2a29;transform:scaleX(0.9015);">39K</span>
<span class="t" style="left:914.81px;top:446px;font-size:19.30px;font-weight:700;color:#000;-webkit-text-stroke:0.55px #000;transform:scaleX(0.9568);">Sum of COGS</span>
<span class="t" style="left:1091.48px;top:446px;font-size:19.30px;font-weight:700;color:#000;-webkit-text-stroke:0.55px #000;transform:scaleX(0.9922);">Total Items Sold</span>
<span class="t" style="left:914.57px;top:504px;font-size:55.20px;color:#2b2a29;letter-spacing:3.50px;-webkit-text-stroke:0.95px #2b2a29;transform:scaleX(0.8323);">0.13</span>
<span class="t" style="left:1092.48px;top:504px;font-size:55.20px;color:#2b2a29;letter-spacing:3.50px;-webkit-text-stroke:0.95px #2b2a29;transform:scaleX(0.8663);">2.90M</span>
<span class="t" style="left:911.41px;top:569px;font-size:19.30px;font-weight:700;color:#000;-webkit-text-stroke:0.55px #000;transform:scaleX(1.0123);">Profit Ratio</span>
<span class="t" style="left:1036.20px;top:569px;font-size:19.30px;font-weight:700;color:#000;-webkit-text-stroke:0.55px #000;transform:scaleX(0.9887);">Sales if not discount offered</span>
<span class="t" style="left:894.86px;top:640px;font-size:55.20px;color:#2b2a29;letter-spacing:3.50px;-webkit-text-stroke:0.95px #2b2a29;transform:scaleX(0.8676);">570.91K</span>
<span class="t" style="left:1133.04px;top:640px;font-size:55.20px;color:#2b2a29;letter-spacing:3.50px;-webkit-text-stroke:0.95px #2b2a29;transform:scaleX(0.9227);">5111</span>
<span class="t" style="left:927.59px;top:704px;font-size:19.30px;font-weight:700;color:#000;-webkit-text-stroke:0.55px #000;transform:scaleX(0.9792);">Total Discount</span>
<span class="t" style="left:1137.08px;top:704px;font-size:19.30px;font-weight:700;color:#000;-webkit-text-stroke:0.55px #000;transform:scaleX(0.9928);">Total orders</span>
<span class="t" style="left:5.02px;top:407px;font-size:18.50px;font-weight:700;color:#252423;transform:scaleX(1.0419);">State/Province</span>
<svg class="b" style="left:89.00px;top:436.00px" width="170" height="110"><path d="M9.5 2.7L15.3 1.2L29.3 5.5L46.4 8.5L63.5 11.0L83.1 12.0L87.3 12.0L87.9 10.0L89.4 12.2L95.3 14.0L105.0 14.7L98.3 17.3L95.9 20.8L101.4 20.5L107.5 18.3L112.4 19.5L118.5 21.0L114.8 22.6L111.8 25.6L109.9 31.8L110.2 38.5L112.4 38.8L112.1 31.8L113.6 25.6L117.3 23.2L120.3 24.4L123.4 29.3L124.6 33.0L124.0 36.6L122.1 39.1L124.6 39.1L129.5 37.3L134.4 33.0L135.6 29.9L140.5 28.7L142.3 25.0L146.6 21.4L152.7 18.3L155.1 13.4L156.6 7.9L161.2 7.3L162.5 12.8L165.9 15.3L162.5 19.5L159.4 24.4L157.6 28.1L161.2 29.9L158.2 31.8L153.9 33.6L152.1 36.0L149.0 39.1L148.4 44.0L147.2 47.6L149.0 50.1L147.8 53.7L150.2 57.4L147.2 62.3L142.9 67.2L138.0 73.3L135.0 78.2L134.4 83.1L138.0 89.2L141.7 96.5L141.7 100.2L139.9 102.6L136.8 99.6L132.5 94.1L131.3 89.2L128.3 85.5L123.4 86.1L114.8 85.5L107.5 86.1L106.3 86.7L109.3 89.8L102.6 89.8L97.7 86.7L92.8 86.7L87.9 90.4L83.1 95.3L80.6 99.6L80.4 103.8L75.7 102.0L73.3 96.5L69.6 91.6L66.0 88.6L62.3 87.9L59.2 90.4L56.2 86.7L53.1 81.8L50.1 78.8L44.6 78.8L44.0 80.0L36.6 79.4L26.3 74.5L23.8 70.2L15.9 69.6L13.4 66.0L7.9 61.7L6.1 57.4L4.3 50.1L2.4 42.8L1.2 35.4L2.4 30.5L4.3 24.4L6.7 17.1L8.5 9.8Z" fill="#e66c37" stroke="#b0653f" stroke-width="0.5" stroke-linejoin="round"/><path d="M8.5 15.3L14.6 14.7L26.9 16.5M4.3 28.1L25.0 31.1L41.5 33.6M28.7 6.1L28.1 16.5L25.0 31.1M31.8 6.7L34.2 17.1L37.9 23.2L42.1 24.4L62.3 25.6M63.5 11.0L62.3 25.6M42.1 24.4L41.5 40.3L61.7 42.1L62.3 25.6M31.8 35.4L29.3 55.0M13.4 32.4L12.8 44.0L25.6 62.3L26.9 56.2L29.3 55.0L44.6 56.8M45.8 40.9L44.6 56.8L42.1 79.4M45.8 40.9L66.6 42.8L66.2 59.2L44.6 56.8M62.3 59.9L61.7 79.4L50.1 78.8M62.9 22.6L83.1 23.0M83.1 12.0L84.3 23.0L85.5 37.9M62.3 35.4L83.1 36.0L86.1 37.9L89.2 47.0M66.6 46.4L87.9 47.0M66.2 59.2L89.8 59.9M88.6 47.0L89.8 59.9L91.0 72.7M62.3 62.3L72.7 62.3L72.7 68.4L81.8 72.1L91.0 72.7L92.8 75.7L92.8 86.7M84.3 33.6L98.9 33.6M95.9 20.8L95.3 25.6L98.9 33.6L102.6 39.1L100.2 44.6L105.0 55.0L107.5 59.9L105.0 62.3L105.0 68.4L102.6 75.1L100.8 83.1L106.3 83.7M86.1 44.6L100.2 44.6M89.8 62.3L105.0 62.3M92.2 75.1L102.6 75.1M101.4 39.7L109.9 39.7M110.5 40.3L111.2 53.7L108.7 58.6M118.5 39.7L119.1 50.1M111.2 39.1L124.6 39.1M130.7 36.6L131.3 46.4M135.6 34.2L147.8 31.8L149.0 24.4L152.7 18.3M131.3 46.4L146.6 44.0M152.1 20.8L153.9 29.3L158.8 28.1M155.1 14.7L157.6 25.6M108.7 58.6L114.8 55.0L119.7 50.1L127.0 47.6L131.3 46.4M107.5 61.7L135.6 57.4M105.0 68.4L129.5 65.3M124.6 59.2L149.0 55.6M127.0 47.6L130.7 52.5L125.8 58.6M131.3 46.4L135.6 50.1L141.7 46.4M135.6 50.1L146.6 50.1M129.5 65.3L136.8 64.1L142.9 67.2M129.5 65.3L135.6 74.5M120.9 66.6L123.4 83.1M111.2 67.2L111.8 85.5M123.4 83.1L134.4 83.1M112.4 83.1L123.4 83.7" fill="none" stroke="#8f6248" stroke-width="0.55" stroke-linejoin="round"/><path d="M8.5 83.1L13.4 81.2L20.8 82.5L22.6 90.4L23.8 94.1L29.3 96.5L33.0 100.2L30.5 100.8L25.6 97.1L19.5 96.5L14.6 98.9L11.0 102.0L6.1 104.4L2.4 105.1L7.3 102.0L11.0 98.3L7.3 95.3L6.7 91.6L9.2 87.9L7.3 85.5Z" fill="#12239e"/><path d="M51.9 100.8L54.3 99.6L56.2 102.6L53.7 105.1L51.9 103.8Z" fill="#12239e"/><circle cx="37.9" cy="92.8" r="0.61" fill="#3a4aa8"/><circle cx="44.6" cy="94.7" r="0.73" fill="#3a4aa8"/><circle cx="48.9" cy="97.1" r="0.86" fill="#3a4aa8"/><circle cx="51.9" cy="98.9" r="0.73" fill="#3a4aa8"/><circle cx="4.3" cy="90.4" r="0.73" fill="#3a4aa8"/><circle cx="-4.9" cy="104.4" r="0.61" fill="#3a4aa8"/><circle cx="-2.5" cy="105.1" r="0.49" fill="#3a4aa8"/></svg>
<span class="t" style="left:506.88px;top:418px;font-size:17.00px;font-weight:700;color:#252423;transform:scaleX(1.0102);">MyDiscountRatio</span>
<svg class="b" style="left:0;top:0" width="1326" height="746"><path d="M662.5 443.3A108.7 108.7 0 0 1 771.2 552.0L738.5 552.0A76.0 76.0 0 0 0 662.5 476.0Z" fill="#f0f0f0"/><path d="M553.8 552.0A108.7 108.7 0 0 1 662.5 443.3L662.5 476.0A76.0 76.0 0 0 0 586.5 552.0Z" fill="#ee3c12"/></svg>
<span class="t" style="left:634.58px;top:515px;font-size:36.50px;color:#605e5c;letter-spacing:1.00px;-webkit-text-stroke:0.50px #605e5c;transform:scaleX(0.7629);">0.20</span>
<span class="t" style="left:512.34px;top:538px;font-size:17.50px;font-weight:700;color:#000;transform:scaleX(1.0850);">0.00</span>
<span class="t" style="left:776.04px;top:538px;font-size:17.50px;font-weight:700;color:#000;transform:scaleX(1.0819);">0.39</span>
<span class="t" style="left:4.13px;top:582px;font-size:17.00px;color:#252423;letter-spacing:0.30px;transform:scaleX(1.0042);">Profit and sales by month</span>
<div class="b" style="left:6.20px;top:615.50px;width:10.00px;height:10.00px;background:#e66c37;border-radius:50%"></div>
<span class="t" style="left:18.40px;top:615px;font-size:12.50px;font-weight:700;color:#111;transform:scaleX(0.9453);">Sum of Sales</span>
<div class="b" style="left:98.30px;top:615.50px;width:10.00px;height:10.00px;background:#12239e;border-radius:50%"></div>
<span class="t" style="left:110.59px;top:615px;font-size:12.50px;font-weight:700;color:#111;transform:scaleX(0.9941);">Sum of Profit</span>
<span class="t" style="left:24.35px;top:638px;font-size:12.40px;color:#111;-webkit-text-stroke:0.60px #111;transform:scaleX(1.0434);">0.4M</span>
<span class="t" style="left:24.35px;top:666px;font-size:12.40px;color:#111;-webkit-text-stroke:0.60px #111;transform:scaleX(1.0434);">0.2M</span>
<span class="t" style="left:24.35px;top:694px;font-size:12.40px;color:#111;-webkit-text-stroke:0.60px #111;transform:scaleX(1.0434);">0.0M</span>
<div class="b rot" style="left:14.30px;top:700.30px;transform:rotate(-90deg)"><span class="t" style="left:-0.10px;top:-9px;font-size:11.50px;font-weight:700;color:#252423;-webkit-text-stroke:0.30px #252423;transform:scaleX(0.8541);">Sum of Sa...</span></div>
<svg class="b" style="left:0;top:0" width="1326" height="746"><polyline points="89.3,686.3 154.9,691.0 220.5,670.1 286.2,680.1 351.8,677.4 417.4,677.8 483.0,678.7 548.6,677.0 614.3,655.8 679.9,670.5 745.5,650.0 811.1,653.2" fill="none" stroke="#e66c37" stroke-width="3" stroke-linejoin="round" stroke-linecap="round"/><polyline points="89.3,698.2 154.9,698.0 220.5,696.0 286.2,698.0 351.8,697.0 417.4,697.5 483.0,698.0 548.6,696.5 614.3,694.5 679.9,695.0 745.5,694.5 811.1,693.0" fill="none" stroke="#12239e" stroke-width="3" stroke-linejoin="round" stroke-linecap="round"/></svg>
<div class="b rot" style="left:88.50px;top:709.20px;transform:rotate(-32deg)"><span class="t" style="left:-39.54px;top:-9px;font-size:11.80px;font-weight:700;color:#111;-webkit-text-stroke:0.30px #111;transform:scaleX(0.8705);">January</span></div>
<div class="b rot" style="left:154.12px;top:709.20px;transform:rotate(-32deg)"><span class="t" style="left:-44.14px;top:-9px;font-size:11.80px;font-weight:700;color:#111;-webkit-text-stroke:0.30px #111;transform:scaleX(0.8711);">February</span></div>
<div class="b rot" style="left:219.74px;top:709.20px;transform:rotate(-32deg)"><span class="t" style="left:-29.70px;top:-9px;font-size:11.80px;font-weight:700;color:#111;-webkit-text-stroke:0.30px #111;transform:scaleX(0.8681);">March</span></div>
<div class="b rot" style="left:285.36px;top:709.20px;transform:rotate(-32deg)"><span class="t" style="left:-22.72px;top:-9px;font-size:11.80px;font-weight:700;color:#111;-webkit-text-stroke:0.30px #111;transform:scaleX(0.8655);">April</span></div>
<div class="b rot" style="left:350.98px;top:709.20px;transform:rotate(-32deg)"><span class="t" style="left:-19.97px;top:-9px;font-size:11.80px;font-weight:700;color:#111;-webkit-text-stroke:0.30px #111;transform:scaleX(0.8636);">May</span></div>
<div class="b rot" style="left:416.60px;top:709.20px;transform:rotate(-32deg)"><span class="t" style="left:-23.70px;top:-9px;font-size:11.80px;font-weight:700;color:#111;-webkit-text-stroke:0.30px #111;transform:scaleX(0.8660);">June</span></div>
<div class="b rot" style="left:482.22px;top:709.20px;transform:rotate(-32deg)"><span class="t" style="left:-20.55px;top:-9px;font-size:11.80px;font-weight:700;color:#111;-webkit-text-stroke:0.30px #111;transform:scaleX(0.8643);">July</span></div>
<div class="b rot" style="left:547.84px;top:709.20px;transform:rotate(-32deg)"><span class="t" style="left:-35.40px;top:-9px;font-size:11.80px;font-weight:700;color:#111;-webkit-text-stroke:0.30px #111;transform:scaleX(0.8697);">August</span></div>
<div class="b rot" style="left:613.46px;top:709.20px;transform:rotate(-32deg)"><span class="t" style="left:-35.97px;top:-9px;font-size:11.80px;font-weight:700;color:#111;-webkit-text-stroke:0.30px #111;transform:scaleX(0.8698);">Septe...</span></div>
<div class="b rot" style="left:679.08px;top:709.20px;transform:rotate(-32deg)"><span class="t" style="left:-39.38px;top:-9px;font-size:11.80px;font-weight:700;color:#111;-webkit-text-stroke:0.30px #111;transform:scaleX(0.8704);">October</span></div>
<div class="b rot" style="left:744.70px;top:709.20px;transform:rotate(-32deg)"><span class="t" style="left:-33.07px;top:-9px;font-size:11.80px;font-weight:700;color:#111;-webkit-text-stroke:0.30px #111;transform:scaleX(0.8690);">Nove...</span></div>
<div class="b rot" style="left:810.32px;top:709.20px;transform:rotate(-32deg)"><span class="t" style="left:-41.71px;top:-9px;font-size:11.80px;font-weight:700;color:#111;-webkit-text-stroke:0.30px #111;transform:scaleX(0.8707);">Decem...</span></div>
</main>
<aside class="b" style="left:1424px;top:200px;width:42px;height:746px;background:#fff;border-left:1px solid #b3b0ad;">
<svg class="b" style="left:0;top:0" width="42" height="100" viewBox="1425 200 42 100"><path d="M1445 214.800l-6.700 6.700 6.700 6.700M1452 214.800l-6.700 6.700 6.700 6.700" fill="none" stroke="#252423" stroke-width="1.300"/><path d="M1454.600 252.300v13.600l-7-5h-5.200v-3.600h5.200z" fill="none" stroke="#252423" stroke-width="1.300" stroke-linejoin="round"/></svg>
<div class="b rot" style="left:13.60px;top:78.00px;transform:rotate(90deg)"><span class="t" style="left:-1.41px;top:-15px;font-size:18.00px;color:#252423;-webkit-text-stroke:0.35px #252423;transform:scaleX(1.1015);">Filters</span></div>
</aside>
<div class="b" style="left:47.00px;top:946.00px;width:1419.00px;height:44.00px;background:#f3f2f1;"></div>
<div class="b" style="left:97.50px;top:946.00px;width:94.50px;height:43.80px;background:#fff;border-bottom:4.6px solid #117865;border-left:1px solid #e1dfdd"></div>
<span class="t" style="left:122.89px;top:960px;font-size:15.90px;color:#252423;transform:scaleX(0.8716);">Page 1</span>
<div class="b" style="left:192.00px;top:948.00px;width:49.00px;height:40.00px;background:#117865;"></div>
<div class="b" style="left:209.50px;top:965.50px;width:14.00px;height:4.00px;background:#fff;"></div>
<div class="b" style="left:214.50px;top:960.50px;width:4.00px;height:14.00px;background:#fff;"></div>
<svg class="b" style="left:54.00px;top:961.00px;" width="10" height="12" viewBox="0 0 10 12"><path d="M7 1L2 6l5 5z" fill="#c8c6c4"/></svg>
<svg class="b" style="left:81.00px;top:961.00px;" width="10" height="12" viewBox="0 0 10 12"><path d="M3 1l5 5-5 5z" fill="#c8c6c4"/></svg>
<aside class="b" style="left:1466px;top:200px;width:226px;height:790px;background:#f3f2f1;border-right:1px solid #e1dfdd">
<span class="t" style="left:11.28px;top:15px;font-size:20.00px;color:#252423;-webkit-text-stroke:0.55px #252423;transform:scaleX(1.0054);">Visualizations</span>
<span class="t" style="left:10.02px;top:51px;font-size:14.80px;color:#252423;-webkit-text-stroke:0.50px #252423;transform:scaleX(1.0379);">Build visual</span>
<div class="b" style="left:10.30px;top:72.00px;width:40.00px;height:39.50px;background:#d2d0ce;"></div>
<div class="b" style="left:0.00px;top:127.00px;width:226.00px;height:1.20px;background:#b3b0ad;"></div>
<svg class="b" style="left:19.70px;top:118.00px;" width="20" height="10" viewBox="0 0 20 10"><path d="M0 9.5L10 0.800l10 8.700" fill="#f3f2f1" stroke="#b3b0ad" stroke-width="1.1"/></svg>
<div class="b" style="left:0.00px;top:390.50px;width:226.00px;height:1.00px;background:#e1dfdd;"></div>
<span class="t" style="left:16.00px;top:406px;font-size:14.80px;color:#252423;transform:scaleX(0.9391);">Values</span>
<div class="b" style="left:5.50px;top:429.30px;width:212.50px;height:33.70px;background:#fff;border:1px dashed #c8c6c4"></div>
<span class="t" style="left:19.30px;top:440px;font-size:14.80px;color:#252423;transform:scaleX(1.0110);">Add data fields here</span>
<span class="t" style="left:14.90px;top:481px;font-size:14.80px;color:#3b3a39;-webkit-text-stroke:0.40px #3b3a39;transform:scaleX(1.1017);">Drill through</span>
<span class="t" style="left:15.26px;top:512px;font-size:14.80px;color:#252423;transform:scaleX(1.0028);">Cross-report</span>
<span class="t" style="left:14.82px;top:546px;font-size:14.80px;color:#252423;">Keep all filters</span>
<div class="b" style="left:177.80px;top:509.00px;width:40.30px;height:19.90px;background:#fff;border:1px solid #8a8886;border-radius:11px"></div>
<div class="b" style="left:183.50px;top:514.50px;width:9.50px;height:9.50px;background:#605e5c;border-radius:50%"></div>
<span class="t" style="left:194.95px;top:515px;font-size:10.50px;color:#605e5c;transform:scaleX(1.1578);">Off</span>
<div class="b" style="left:177.80px;top:543.30px;width:40.30px;height:19.90px;background:#55534f;border-radius:11px"></div>
<div class="b" style="left:201.50px;top:548.50px;width:10.00px;height:10.00px;background:#fff;border-radius:50%"></div>
<span class="t" style="left:183.51px;top:549px;font-size:10.50px;color:#fff;transform:scaleX(1.0453);">On</span>
<div class="b" style="left:5.50px;top:576.00px;width:212.50px;height:31.20px;background:#fff;border:1px dashed #c8c6c4"></div>
<span class="t" style="left:16.30px;top:585px;font-size:14.80px;color:#252423;transform:scaleX(1.0415);">Add drill-through fields here</span>
<svg class="b" style="left:0;top:0" width="226" height="400" viewBox="1466 200 226 400"><path d="M1666.300 217.600l6.900 7.100-6.900 7.100M1673.300 217.600l6.900 7.100-6.900 7.100" fill="none" stroke="#252423" stroke-width="1.300"/><path d="M1481.500 277.700h23.300" stroke="#3b3a39" stroke-width="1.100"/><rect x="1481.800" y="283.3" width="28.800" height="10" fill="#117865" stroke="#0b3d33" stroke-width="1.100" stroke-dasharray="2 1.300"/><rect x="1481.800" y="296.8" width="28.800" height="10" fill="#117865" stroke="#0b3d33" stroke-width="1.100" stroke-dasharray="2 1.300"/><path d="M1572 306h-7.300v-28.300h12.600l5.800 5.800v4" fill="none" stroke="#252423" stroke-width="1.300"/><path d="M1577.300 277.700v5.800h5.800" fill="none" stroke="#252423" stroke-width="1.200"/><path d="M1593.300 288.300l-11.500 12.500" stroke="#252423" stroke-width="1.600"/><path d="M1572 306c3 0 4-2.500 5.500-4.500 1.800-2.300 5.500-1 5.800 1.500 0.300 3-4.500 5-11.300 3z" fill="none" stroke="#252423" stroke-width="1.300"/><g transform="translate(1480,344.2)"><path d="M0.700 0v22.300h22.300" fill="none" stroke="#3b3a39" stroke-width="1.400"/><rect x="1.4" y="2.7" width="5.5" height="5.3" fill="#fff" stroke="#3b3a39" stroke-width="1.1"/><rect x="6.9" y="2.7" width="8.6" height="5.3" fill="#69afe5" stroke="#1f6fb5" stroke-width="1.1"/><rect x="1.4" y="12.4" width="8.2" height="5.3" fill="#fff" stroke="#3b3a39" stroke-width="1.1"/><rect x="9.6" y="12.4" width="11" height="5.3" fill="#c8c6c4" stroke="#8a8886" stroke-width="1.1"/></g><g transform="translate(1515,344.2)"><path d="M0.700 0v22.300h22.300" fill="none" stroke="#3b3a39" stroke-width="1.400"/><rect x="5" y="6.5" width="5.3" height="8" fill="#69afe5" stroke="#1f6fb5" stroke-width="1.1"/><rect x="5" y="14.5" width="5.3" height="7.8" fill="#fff" stroke="#3b3a39" stroke-width="1.1"/><rect x="14.5" y="2.5" width="5.5" height="10.5" fill="#c8c6c4" stroke="#8a8886" stroke-width="1.1"/><rect x="14.5" y="13" width="5.5" height="9.3" fill="#fff" stroke="#3b3a39" stroke-width="1.1"/></g><g transform="translate(1550,344.2)"><path d="M0.700 0v22.300" fill="none" stroke="#3b3a39" stroke-width="1.2" stroke-linejoin="round" /><path d="M0.700 22.300h22.300" fill="none" stroke="#3b3a39" stroke-width="0.9" stroke-linejoin="round" /><rect x="1.2" y="1" width="21" height="4.6" fill="#69afe5" stroke="#1f6fb5" stroke-width="1.1"/><rect x="1.2" y="6" width="12" height="4.6" fill="#fff" stroke="#3b3a39" stroke-width="1.1"/><rect x="1.2" y="11" width="9.5" height="4.6" fill="#c8c6c4" stroke="#8a8886" stroke-width="1.1"/><rect x="1.2" y="16" width="15.5" height="4.6" fill="#fff" stroke="#3b3a39" stroke-width="1.1"/></g><g transform="translate(1585,344.2)"><path d="M0.700 0v22.300h22.300" fill="none" stroke="#3b3a39" stroke-width="1.400"/><rect x="2.5" y="1.2" width="5" height="21" fill="#69afe5" stroke="#1f6fb5" stroke-width="1.1"/><rect x="7.5" y="9" width="4" height="13.3" fill="#fff" stroke="#3b3a39" stroke-width="1.1"/><rect x="11.5" y="12" width="4.5" height="10.3" fill="#c8c6c4" stroke="#8a8886" stroke-width="1.1"/><rect x="16" y="6" width="5" height="16.3" fill="#fff" stroke="#3b3a39" stroke-width="1.1"/></g><g transform="translate(1620,344.2)"><path d="M0.700 0v22.300h22.300" fill="none" stroke="#3b3a39" stroke-width="1.400"/><rect x="1.4" y="2.7" width="4.4" height="5.3" fill="#fff" stroke="#3b3a39" stroke-width="1.1"/><rect x="5.8" y="2.7" width="14" height="5.3" fill="#69afe5" stroke="#1f6fb5" stroke-width="1.1"/><rect x="1.4" y="12.4" width="12" height="5.3" fill="#fff" stroke="#3b3a39" stroke-width="1.1"/><rect x="13.4" y="12.4" width="6.4" height="5.3" fill="#c8c6c4" stroke="#8a8886" stroke-width="1.1"/></g><g transform="translate(1655,344.2)"><path d="M0.700 0v22.300h22.300" fill="none" stroke="#3b3a39" stroke-width="1.400"/><rect x="4.5" y="2.5" width="5.5" height="15" fill="#69afe5" stroke="#1f6fb5" stroke-width="1.1"/><rect x="4.5" y="17.5" width="5.5" height="4.8" fill="#fff" stroke="#3b3a39" stroke-width="1.1"/><rect x="14.5" y="2.5" width="5.5" height="7.8" fill="#c8c6c4" stroke="#8a8886" stroke-width="1.1"/><rect x="14.5" y="10.3" width="5.5" height="12" fill="#fff" stroke="#3b3a39" stroke-width="1.1"/></g><g transform="translate(1480,379.2)"><path d="M0.700 0v22.300h22.300" fill="none" stroke="#3b3a39" stroke-width="1.400"/><path d="M1.500 16l11.500-11.500 9 8.500" fill="none" stroke="#2a7d9b" stroke-width="1.4" stroke-linejoin="round" /><path d="M1.500 12l6-6 7 6.500 7.500-8" fill="none" stroke="#3b3a39" stroke-width="1.3" stroke-linejoin="round" /></g><g transform="translate(1515,379.2)"><path d="M13 10.500l5-10 4.500 8.500v13h-9.500z" fill="#c8c6c4" stroke="#8a8886" stroke-width="1.2" stroke-linejoin="round" /><path d="M0.700 14.500l7.500-12.500 7 11-8 9h-6.500z" fill="#fff" stroke="#3b3a39" stroke-width="1.2" stroke-linejoin="round" /><path d="M0.700 16l4.500 3 8.300-10 9 13.300h-21.800z" fill="#69afe5" stroke="#1f6fb5" stroke-width="1.2" stroke-linejoin="round" /></g><g transform="translate(1550,379.2)"><path d="M1.500 5l5.800 6 8-8 3.500 3h4v10l-7.800-5-7.700 8-5.800-6z" fill="#69afe5" stroke="#1f6fb5" stroke-width="1.2" stroke-linejoin="round" /><path d="M0.700 0v22.300h22.300" fill="none" stroke="#3b3a39" stroke-width="1.400"/></g><g transform="translate(1585,379.2)"><rect x="4.5" y="3" width="5.5" height="12" fill="#69afe5" stroke="#1f6fb5" stroke-width="1.1"/><rect x="4.5" y="15" width="5.5" height="7.3" fill="#fff" stroke="#3b3a39" stroke-width="1.1"/><rect x="14.5" y="3" width="5.5" height="7" fill="#c8c6c4" stroke="#8a8886" stroke-width="1.1"/><rect x="14.5" y="10" width="5.5" height="12.3" fill="#fff" stroke="#3b3a39" stroke-width="1.1"/><path d="M0.700 0v22.300h22.300" fill="none" stroke="#3b3a39" stroke-width="1.400"/><path d="M1.500 20l6-8 6.500 5 8.500-8.500" fill="none" stroke="#3b3a39" stroke-width="1.3" stroke-linejoin="round" /></g><g transform="translate(1620,379.2)"><rect x="4" y="10" width="5" height="12.3" fill="#69afe5" stroke="#1f6fb5" stroke-width="1.1"/><rect x="9" y="1.5" width="5.5" height="20.8" fill="#fff" stroke="#3b3a39" stroke-width="1.1"/><rect x="14.5" y="7" width="5.5" height="15.3" fill="#c8c6c4" stroke="#8a8886" stroke-width="1.1"/><path d="M0.700 0v22.300h22.300" fill="none" stroke="#3b3a39" stroke-width="1.400"/><path d="M1.500 20l6.500-9 6 6 8.500-8.500" fill="none" stroke="#3b3a39" stroke-width="1.3" stroke-linejoin="round" /></g><g transform="translate(1655,379.2)"><path d="M2 5c4 0 5.500 3.500 9.500 3.500s6-5 11-5v5c-5 0-7 5-11 5s-5.500-3.500-9.500-3.500z" fill="#c8c6c4" stroke="#8a8886" stroke-width="0.8" stroke-linejoin="round" /><path d="M2 9.500c4 0 5.500 4.500 9.500 4.500s6-5 11-5v5c-5 0-7 5.500-11 5.500s-5.500-5-9.500-5z" fill="#2f8fe0" stroke="#1f6fb5" stroke-width="0.8" stroke-linejoin="round" /><path d="M2 14.500c4 0 5.500 4.500 9.500 4.500s6-3 11-3v3.500c-5 0-7 2.500-11 2.500s-5.500-3.500-9.500-3.500z" fill="#f0a33c" stroke="#d9822b" stroke-width="0.8" stroke-linejoin="round" /><path d="M0.700 0v22.300h22.300" fill="none" stroke="#3b3a39" stroke-width="1.400"/></g><g transform="translate(1480,414.2)"><rect x="2.5" y="7" width="5" height="15.3" fill="#fff" stroke="#3b3a39" stroke-width="1.1"/><rect x="7.5" y="7" width="4.5" height="6" fill="#c8c6c4" stroke="#8a8886" stroke-width="1.1"/><rect x="12" y="2" width="5" height="11" fill="#69afe5" stroke="#1f6fb5" stroke-width="1.1"/><rect x="17" y="2" width="4.5" height="20.3" fill="#fff" stroke="#3b3a39" stroke-width="1.1"/><path d="M0.700 0v22.300h22.300" fill="none" stroke="#3b3a39" stroke-width="1.400"/></g><g transform="translate(1515,414.2)"><rect x="0.7" y="1.5" width="22" height="6.5" fill="#69afe5" stroke="#1f6fb5" stroke-width="1.3"/><rect x="3.7" y="8" width="16" height="6.5" fill="#69afe5" stroke="#1f6fb5" stroke-width="1.3"/><rect x="6.7" y="14.5" width="10" height="6.5" fill="#69afe5" stroke="#1f6fb5" stroke-width="1.3"/></g><g transform="translate(1550,414.2)"><path d="M0.700 0v22.300h22.300" fill="none" stroke="#3b3a39" stroke-width="1.400"/><rect x="16" y="1.5" width="4" height="4" fill="#3b3a39" stroke="#3b3a39" stroke-width="0"/><rect x="4" y="5.5" width="3.8" height="3.8" fill="#9bb7cc" stroke="#9bb7cc" stroke-width="0"/><rect x="10" y="9.3" width="3.8" height="3.8" fill="#9bb7cc" stroke="#9bb7cc" stroke-width="0"/><rect x="16" y="14.3" width="3.8" height="3.8" fill="#9bb7cc" stroke="#9bb7cc" stroke-width="0"/><rect x="4" y="15" width="4" height="4" fill="#3b3a39" stroke="#3b3a39" stroke-width="0"/></g><g transform="translate(1585,414.2)"><circle cx="11.500" cy="11.500" r="10.600" fill="#fff" stroke="#3b3a39" stroke-width="1.400"/><path d="M11.500 0.900a10.600 10.600 0 0 1 7.500 18.100l-7.500-7.500z" fill="#69afe5" stroke="#1f6fb5" stroke-width="1.3" stroke-linejoin="round" /></g><g transform="translate(1620,414.2)"><circle cx="11.500" cy="11.500" r="7.700" fill="none" stroke="#69afe5" stroke-width="6"/><circle cx="11.500" cy="11.500" r="10.700" fill="none" stroke="#1f6fb5" stroke-width="1.200"/><circle cx="11.500" cy="11.500" r="4.600" fill="none" stroke="#1f6fb5" stroke-width="1.200"/><path d="M0.900 11.500a10.600 10.600 0 0 1 10.600-10.600v6a4.600 4.600 0 0 0-4.600 4.600z" fill="#fff" stroke="#1f6fb5" stroke-width="1.1" stroke-linejoin="round" /></g><g transform="translate(1655,414.2)"><rect x="0.7" y="0.7" width="10" height="11.5" fill="#69afe5" stroke="#1f6fb5" stroke-width="1.3"/><rect x="0.7" y="12.2" width="10" height="10.3" fill="#69afe5" stroke="#1f6fb5" stroke-width="1.3"/><rect x="10.7" y="0.7" width="11.8" height="6.5" fill="#fff" stroke="#3b3a39" stroke-width="1.3"/><rect x="10.7" y="7.2" width="5" height="15.3" fill="#fff" stroke="#3b3a39" stroke-width="1.3"/><rect x="15.7" y="7.2" width="6.8" height="7.5" fill="#fff" stroke="#3b3a39" stroke-width="1.3"/><rect x="15.7" y="14.7" width="6.8" height="7.8" fill="#fff" stroke="#3b3a39" stroke-width="1.3"/></g><g transform="translate(1480,449.2)"><circle cx="11.500" cy="10" r="7.600" fill="#e8f3ec" stroke="#2f6b4f" stroke-width="1.400"/><path d="M8 4.500c2 0.500 2.500 2.500 1 4s-3 1-3.500-0.500zM13.500 5.500l3 1.500-1.500 3-2.500-1zM9.500 12l3.500 0.500 0.500 3-3 0.500z" fill="#3c9a5f" stroke="none" stroke-width="0" stroke-linejoin="round" /><path d="M13 0.500a9.800 9.800 0 1 0 6.500 15" fill="none" stroke="#3b3a39" stroke-width="1.3" stroke-linejoin="round" /><path d="M4 22.300h15" fill="none" stroke="#3b3a39" stroke-width="1.5" stroke-linejoin="round" /></g><g transform="translate(1515,449.2)"><path d="M1.500 1.500l5 1.500 4-1 3.500 1.500 5-1.500h3.500v9l-2 6-3.500 1.500-2 2.500-3-1-3 2.500-4-3-2.500-5z" fill="#69afe5" stroke="#1f6fb5" stroke-width="1.2" stroke-linejoin="round" /><path d="M11 6.500h11v4.500l-4 2-7-1zM2 12.500l7 0.500 1 5-3 2-4.500-4z" fill="#c8c6c4" stroke="none" stroke-width="0" stroke-linejoin="round" /></g><g transform="translate(1550,449.2)"><path d="M1.500 1.500l5 1.500 4-1 3.500 1.500 5-1.500h3.500v9l-2 6-3.500 1.500-2 2.500-3-1-3 2.500-4-3-2.500-5z" fill="#fff" stroke="#1f6fb5" stroke-width="1.2" stroke-linejoin="round" /><path d="M1.500 8.500l9 1.500 11-1M10.500 2.500v8.500l3 4-1.500 6" fill="none" stroke="#69afe5" stroke-width="1" stroke-linejoin="round" /></g><g transform="translate(1585,449.2)"><path d="M1.500 17.500a10.500 10.500 0 0 1 21 0h-4.500a6 6 0 0 0-12 0z" fill="#fff" stroke="#1f6fb5" stroke-width="1.3" stroke-linejoin="round" /><path d="M12 7a10.500 10.500 0 0 1 11 10.500h-4.500a6 6 0 0 0-6.500-6z" fill="#69afe5" stroke="#1f6fb5" stroke-width="1.1" stroke-linejoin="round" /><path d="M11.500 17.500l5-5" fill="none" stroke="#3b3a39" stroke-width="1.8" stroke-linejoin="round" /><circle cx="11.800" cy="17" r="1.600" fill="#3b3a39"/></g><g transform="translate(1620,449.2)"><rect x="0.7" y="3" width="21.6" height="16.5" fill="#fff" stroke="#3b3a39" stroke-width="1.3"/><path d="M3 16.800h17" fill="none" stroke="#8a8886" stroke-width="1" stroke-linejoin="round" /><text x="11.5" y="14.5" font-family="Liberation Sans, sans-serif" font-size="10.5" font-weight="400" fill="#2b88d8" text-anchor="middle">123</text></g><g transform="translate(1655,449.2)"><rect x="0.7" y="0.7" width="21.6" height="21.6" fill="#fff" stroke="#3b3a39" stroke-width="1.3"/><path d="M5 5.500h13M5 12.500h13" fill="none" stroke="#1f6fb5" stroke-width="2" stroke-linejoin="round" /><path d="M5 9h5M5 16h5" fill="none" stroke="#8a8886" stroke-width="1.2" stroke-linejoin="round" /><path d="M3.500 3v17" fill="none" stroke="#8a8886" stroke-width="1" stroke-linejoin="round" /></g><g transform="translate(1480,484.2)"><rect x="0.7" y="2.5" width="21.6" height="17.5" fill="#fff" stroke="#3b3a39" stroke-width="1.3"/><path d="M4 12.500l4-6 4 6z" fill="#5bb075" stroke="#3c9a5f" stroke-width="1" stroke-linejoin="round" /><path d="M13 6l3.500 6 3.500-6z" fill="#e05a5a" stroke="#c43b3b" stroke-width="1" stroke-linejoin="round" /><path d="M3.500 16.500h16" fill="none" stroke="#8a8886" stroke-width="1.2" stroke-linejoin="round" /></g><g transform="translate(1515,484.2)"><rect x="0.7" y="0.7" width="21.6" height="21.6" fill="#fff" stroke="#3b3a39" stroke-width="1.3"/><rect x="1.4" y="1.4" width="20.2" height="3.3" fill="#c8c6c4" stroke="none" stroke-width="0"/><path d="M0.700 5h21.600" fill="none" stroke="#3b3a39" stroke-width="1.1" stroke-linejoin="round" /><rect x="4.5" y="8.5" width="3.8" height="3.8" fill="#c8c6c4" stroke="#8a8886" stroke-width="1"/><rect x="4.5" y="14.5" width="3.8" height="3.8" fill="#c8c6c4" stroke="#8a8886" stroke-width="1"/><path d="M12 12h11.500l-4 5v6h-3.500v-6z" fill="#fff" stroke="#3b3a39" stroke-width="1.4" stroke-linejoin="round" /></g><g transform="translate(1550,484.2)"><rect x="0.7" y="0.7" width="21.6" height="21.6" fill="#fff" stroke="#3b3a39" stroke-width="1.3"/><rect x="1.4" y="1.4" width="20.2" height="3.3" fill="#c8c6c4" stroke="none" stroke-width="0"/><path d="M0.700 5h21.600M0.700 10.500h21.600M0.700 16h21.600M8 5v17M15 5v17" fill="none" stroke="#3b3a39" stroke-width="1.1" stroke-linejoin="round" /></g><g transform="translate(1585,484.2)"><rect x="0.7" y="0.7" width="21.6" height="21.6" fill="#fff" stroke="#3b3a39" stroke-width="1.3"/><rect x="1.4" y="1.4" width="20.2" height="3.3" fill="#c8c6c4" stroke="none" stroke-width="0"/><rect x="15" y="5" width="7" height="17" fill="#69afe5" stroke="none" stroke-width="0"/><rect x="1" y="16" width="21" height="6" fill="#69afe5" stroke="none" stroke-width="0"/><path d="M0.700 5h21.600M0.700 10.500h21.600M0.700 16h21.600M8 5v17M15 5v17" fill="none" stroke="#3b6f9b" stroke-width="1.1" stroke-linejoin="round" /></g><g transform="translate(1620,484.2)"><g transform="translate(11.5 0) scale(0.86 1)"><text x="0" y="19" font-family="Liberation Sans, sans-serif" font-size="20.5" font-weight="700" fill="#2579bd" text-anchor="middle">R</text></g></g><g transform="translate(1655,484.2)"><g transform="translate(11.3 0) scale(0.93 1)"><text x="0" y="17" font-family="Liberation Sans, sans-serif" font-size="20.5" font-weight="700" fill="#2579bd" text-anchor="middle">Py</text></g></g><g transform="translate(1480,519.2)"><path d="M0.700 0v22.300h22.300" fill="none" stroke="#3b3a39" stroke-width="1.400"/><path d="M1 4.500h15M1 10.500h11M1 15.800h6" fill="none" stroke="#8a8886" stroke-width="1.2" stroke-linejoin="round" /><circle cx="18.800" cy="4.500" r="2.900" fill="#69afe5" stroke="#1f6fb5" stroke-width="1.100"/><circle cx="13.500" cy="10.500" r="1.900" fill="#c8c6c4" stroke="#8a8886" stroke-width="1"/><circle cx="8.300" cy="15.800" r="1.700" fill="#c8c6c4" stroke="#8a8886" stroke-width="1"/></g><g transform="translate(1515,519.2)"><path d="M8.500 11h4M12.500 3.500v15.500M12.500 3.500h3M12.500 11h3M12.500 19h3" fill="none" stroke="#1f4f7a" stroke-width="1.3" stroke-linejoin="round" /><rect x="0.7" y="8.7" width="7.8" height="4.8" fill="#69afe5" stroke="#1f6fb5" stroke-width="1.1"/><rect x="15" y="1" width="7.5" height="4.8" fill="#69afe5" stroke="#1f6fb5" stroke-width="1.1"/><rect x="15" y="8.7" width="7.5" height="4.8" fill="#69afe5" stroke="#1f6fb5" stroke-width="1.1"/><rect x="15" y="16.5" width="7.5" height="4.8" fill="#69afe5" stroke="#1f6fb5" stroke-width="1.1"/></g><g transform="translate(1550,519.2)"><path d="M0.900 2.500h21.500v14h-13.500l-4 4.500v-4.500h-4z" fill="#fdfdfd" stroke="#1f6fb5" stroke-width="1.5" stroke-linejoin="round" /></g><g transform="translate(1585,519.2)"><path d="M3.500 1.200h10.500l5.500 5.500v15.300h-16z" fill="#fdfdfd" stroke="#3b3a39" stroke-width="1.3" stroke-linejoin="round" /><path d="M14 1.200v5.500h5.500" fill="none" stroke="#3b3a39" stroke-width="1.2" stroke-linejoin="round" /><circle cx="4" cy="9.500" r="2.300" fill="#69afe5" stroke="#1f6fb5" stroke-width="1"/><path d="M8 11h8M8 14.500h7" fill="none" stroke="#1f6fb5" stroke-width="1.2" stroke-linejoin="round" /></g><g transform="translate(1620,519.2)"><path d="M5.500 2.500h12v6.500a6 6 0 0 1-12 0z" fill="#dcecf9" stroke="#3b3a39" stroke-width="1.4" stroke-linejoin="round" /><path d="M5.500 4h-4c0 4 1.500 6.500 5 7M17.500 4h4c0 4-1.500 6.500-5 7" fill="none" stroke="#3b3a39" stroke-width="1.3" stroke-linejoin="round" /><path d="M10 15l-1.500 4.500h6l-1.500-4.500" fill="none" stroke="#3b3a39" stroke-width="1.3" stroke-linejoin="round" /><rect x="5.5" y="19.5" width="12" height="2.8" fill="#69afe5" stroke="#1f6fb5" stroke-width="1"/><rect x="6" y="1.5" width="11" height="2" fill="#69afe5" stroke="#1f6fb5" stroke-width="0.8"/></g><g transform="translate(1655,519.2)"><path d="M2.500 0.700h11l6 6v16h-17z" fill="#fdfdfd" stroke="#3b3a39" stroke-width="1.4" stroke-linejoin="round" /><path d="M13.500 0.700v6h6" fill="none" stroke="#3b3a39" stroke-width="1.3" stroke-linejoin="round" /><rect x="5.5" y="14" width="2.6" height="6" fill="#323130" stroke="none" stroke-width="0"/><rect x="9.8" y="16.5" width="2.6" height="3.5" fill="#323130" stroke="none" stroke-width="0"/><rect x="14" y="11" width="2.6" height="9" fill="#323130" stroke="none" stroke-width="0"/></g><g transform="translate(1480,554.2)"><path d="M0.700 12v9.700h13.700M8.500 0.600h13.700v8.500" fill="none" stroke="#1f6fb5" stroke-width="2.4" stroke-linejoin="round" /><path d="M19.900 4.800l-6.600 2.900-1.500 5.100-2.900 5.100" fill="none" stroke="#6fb1e6" stroke-width="3.4" stroke-linejoin="round" /><path d="M-0.800 0.200a1.200 1.200 0 0 1 1.200-1.200h5a1.200 1.200 0 0 1 1.200 1.200v5.800l-3.700 5.300-3.700-5.300z" fill="#d9690f" stroke="#c25e0c" stroke-width="0.6" stroke-linejoin="round" /><circle cx="2.900" cy="3.800" r="1.300" fill="#fff"/><circle cx="19.500" cy="19.400" r="3.400" fill="#d9690f"/><circle cx="22" cy="12.900" r="1.900" fill="#d9690f"/></g><g transform="translate(1515,554.2)"><path d="M0.800 10.100L10.800 1.300q2-1.300 4 0l7.300 8q1.200 1.600 0 3.200l-7.300 8q-2 1.300-4 0l-10-8.800q-1-1.200 0-1.600z" fill="#fbf3fc" stroke="#7a2a82" stroke-width="1.3" stroke-linejoin="round" /><path d="M9.500 5.300l9.200 10.600M18.500 5.600l-9 10.400M10.800 1.300q-2.500 3-1.300 4l-0.300 10.700q0 3 1.600 4.500" fill="none" stroke="#b146c2" stroke-width="1.2" stroke-linejoin="round" /></g><g transform="translate(1550,554.2)"><path d="M0.600 1.500h14.200l7.700 9.100-7.700 9.500h-14.200l7.300-9.500z" fill="#e3f3ff" stroke="#1f6fb5" stroke-width="1.4" stroke-linejoin="round" /><path d="M14.500 1.800l-12.800 17.200M19.200 6.600l-10.900 13.100" fill="none" stroke="#1f6fb5" stroke-width="1.3" stroke-linejoin="round" /></g><g transform="translate(1585,554.2)"><rect x="2.6" y="8.7" width="2" height="2" fill="#3b3a39" stroke="none" stroke-width="0"/><rect x="9.9" y="8.7" width="2" height="2" fill="#3b3a39" stroke="none" stroke-width="0"/><rect x="17.6" y="8.7" width="2" height="2" fill="#3b3a39" stroke="none" stroke-width="0"/></g></svg>
</aside>
<aside class="b" style="left:1692px;top:200px;width:225px;height:790px;background:#f3f2f1">
<span class="t" style="left:10.02px;top:15px;font-size:20.00px;-webkit-text-stroke:0.55px #252423;transform:scaleX(0.9716);">Fields</span>
<div class="b" style="left:5.30px;top:57.50px;width:214.50px;height:32.50px;background:#fff;border:1px solid #8a8886;border-radius:2px"></div>
<span class="t" style="left:41.06px;top:66px;font-size:18.00px;color:#605e5c;transform:scaleX(0.9114);">Search</span>
<span class="t" style="left:51.35px;top:109px;font-size:15.30px;color:#3b3a39;transform:scaleX(0.9378);">SuperStoreData</span>
<svg class="b" style="left:0;top:0" width="225" height="200" viewBox="1692 200 225 200"><path d="M1892.500 217.500l6.900 7.100-6.900 7.100M1899.500 217.500l6.900 7.100-6.900 7.100" fill="none" stroke="#252423" stroke-width="1.300"/><circle cx="1719.600" cy="271.100" r="5.100" fill="none" stroke="#484644" stroke-width="1.200"/><path d="M1716 274.700l-8.300 8" stroke="#484644" stroke-width="1.200" fill="none"/><path d="M1705 309.500l6.500 6.700-6.500 6.700" fill="none" stroke="#605e5c" stroke-width="1.200"/><rect x="1720.100" y="309.200" width="15.300" height="13.700" fill="#fff" stroke="#3b3a39" stroke-width="1.300"/><path d="M1720.100 313.400h15.300M1720.100 316.600h15.300M1720.100 319.800h15.300M1725.200 312v11M1730.300 312v11" stroke="#3b3a39" stroke-width="1.100" fill="none"/><path d="M1720.500 310.700h14.500" stroke="#3b3a39" stroke-width="2.200"/></svg>
</aside>
<footer class="b" style="left:0;top:990px;width:1917px;height:33px;background:#f3f2f1;border-top:1px solid #e1dfdd">
<span class="t" style="left:3.04px;top:7px;font-size:15.20px;color:#605e5c;transform:scaleX(0.9572);">Page 1 of 1</span>
<span class="t" style="left:1815.43px;top:7px;font-size:14.50px;color:#605e5c;transform:scaleX(0.9852);">83%</span>
<div class="b" style="left:1652.00px;top:14.00px;width:125.00px;height:1.00px;background:#605e5c;"></div>
<div class="b" style="left:1700.50px;top:8.00px;width:5.00px;height:13.00px;background:#605e5c;"></div>
<div class="b" style="left:1714.50px;top:10.00px;width:1.00px;height:9.00px;background:#605e5c;"></div>
<div class="b" style="left:1641.50px;top:14.50px;width:5.00px;height:1.50px;background:#605e5c;"></div>
<div class="b" style="left:1784.50px;top:14.00px;width:10.00px;height:1.50px;background:#605e5c;"></div>
<div class="b" style="left:1788.80px;top:9.50px;width:1.50px;height:10.00px;background:#605e5c;"></div>
<svg class="b" style="left:1868.00px;top:6.00px;" width="21" height="17" viewBox="0 0 21 17"><rect x="1" y="1" width="19" height="15" fill="none" stroke="#605e5c" stroke-width="1.6"/><path d="M4 7V4h3M14 4h3v3M17 10v3h-3M7 13H4v-3" fill="none" stroke="#605e5c" stroke-width="1.2"/></svg>
<div class="b" style="left:0.00px;top:29.30px;width:1917.00px;height:1.20px;background:#a9d6cf;"></div>
<div class="b" style="left:0.00px;top:30.50px;width:1917.00px;height:1.50px;background:#eaf1f0;"></div>
<div class="b" style="left:102.00px;top:31.00px;width:32.00px;height:1.00px;background:#b9b7b5;"></div>
<div class="b" style="left:170.00px;top:31.00px;width:4.00px;height:1.00px;background:#3b3a39;"></div>
<div class="b" style="left:213.00px;top:31.00px;width:12.00px;height:1.00px;background:#55534f;"></div>
<div class="b" style="left:244.00px;top:31.00px;width:21.00px;height:1.00px;background:#e58d8d;"></div>
</footer>
</body></html>
